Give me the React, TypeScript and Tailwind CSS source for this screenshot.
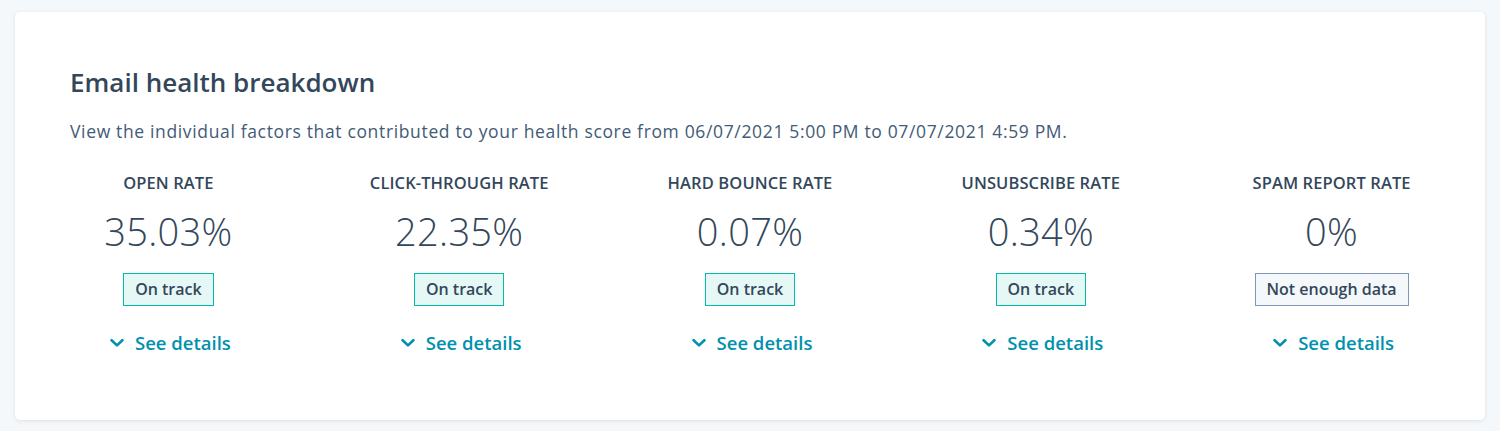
import React from "react";

type Metric = { label: string; value: string; status: string; ok: boolean };

const metrics: Metric[] = [
  { label: "OPEN RATE", value: "35.03%", status: "On track", ok: true },
  { label: "CLICK-THROUGH RATE", value: "22.35%", status: "On track", ok: true },
  { label: "HARD BOUNCE RATE", value: "0.07%", status: "On track", ok: true },
  { label: "UNSUBSCRIBE RATE", value: "0.34%", status: "On track", ok: true },
  { label: "SPAM REPORT RATE", value: "0%", status: "Not enough data", ok: false },
];

function Chevron() {
  return (
    <svg width="14" height="10" viewBox="0 0 14 10" fill="none">
      <path d="M1.6 2.2L7 7.4L12.4 2.2" stroke="#0091ae" strokeWidth="2.6" strokeLinecap="round" strokeLinejoin="round" />
    </svg>
  );
}

export default function App() {
  return (
    <div className="w-[1500px] h-[431px] bg-[#f5f8fa] pt-[12px] px-[15px] font-['Open_Sans',sans-serif] text-[#33475b]">
      <div className="h-[408px] bg-white rounded-[5px] shadow-[0_1px_4px_rgba(45,62,80,0.12)] px-[55px] pt-[52px]">
        <h1 className="text-[26px] leading-[36px] font-semibold">Email health breakdown</h1>
        <p className="mt-[18.5px] text-[17.5px] leading-[24px] tracking-[0.65px] text-[#425b76]">
          View the individual factors that contributed to your health score from 06/07/2021 5:00 PM to 07/07/2021 4:59 PM.
        </p>
        <div className="-mx-[47px] mt-[29px] grid grid-cols-5">
          {metrics.map((m) => (
            <div key={m.label} className="flex flex-col items-center">
              <div className="text-[16.5px] leading-[22px] font-semibold tracking-[0.1px]">{m.label}</div>
              <div className="mt-[14px] text-[38px] leading-[46px] font-light tracking-[0.3px]">{m.value}</div>
              <div
                className={
                  "mt-[19px] h-[33px] px-[11px] flex items-center text-[16px] font-semibold border " +
                  (m.ok ? "bg-[#e5f8f6] border-[#00bda5]" : "bg-[#f5f8fa] border-[#7c98b6]")
                }
              >
                {m.status}
              </div>
              <div className="mt-[24.5px] ml-[4px] flex items-center gap-[11px] text-[18.5px] leading-[26px] font-semibold text-[#0091ae]">
                <Chevron />
                <span>See details</span>
              </div>
            </div>
          ))}
        </div>
      </div>
    </div>
  );
}
